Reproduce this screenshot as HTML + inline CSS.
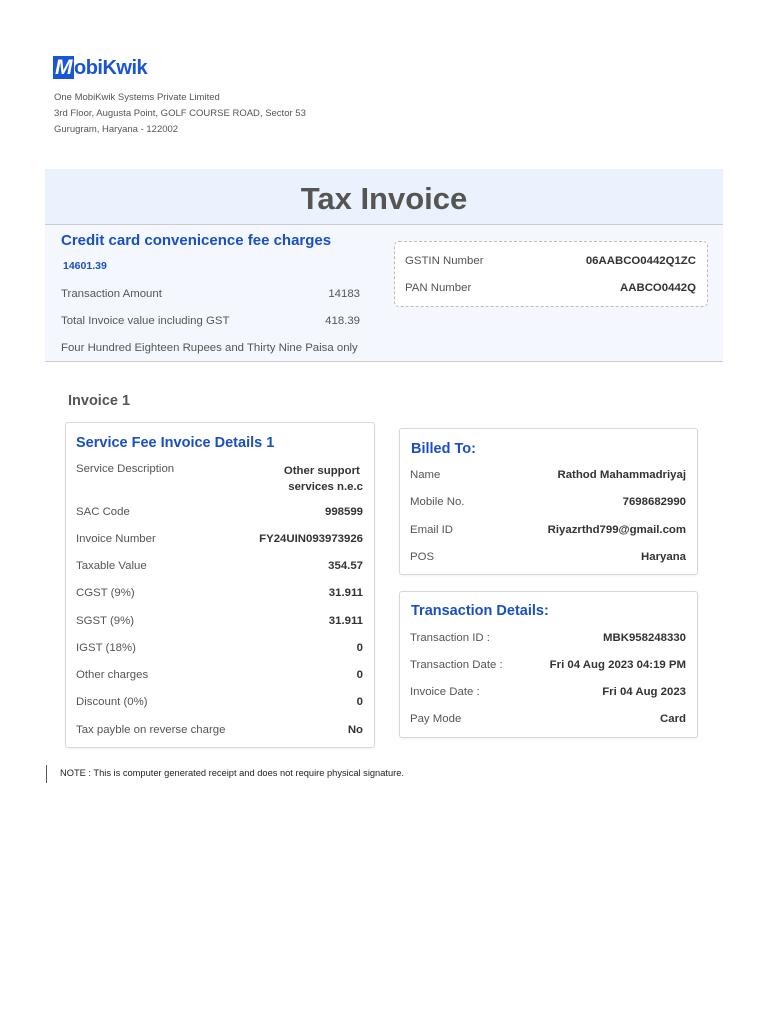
<!DOCTYPE html>
<html><head><meta charset="utf-8"><style>
*{margin:0;padding:0;box-sizing:border-box}
body{width:768px;height:1024px;background:#fff;font-family:"Liberation Sans",Arial,sans-serif;position:relative;overflow:hidden;color:#555}
.a{position:absolute;white-space:nowrap}
.s{font-size:11.4px;color:#555;margin-top:2px}
.b{font-weight:bold;color:#333}
.r{text-align:right}
.blue{color:#1a4fc4;font-weight:bold;margin-top:1px}
.card{position:absolute;border:1px solid #d8d8d8;border-radius:3px;background:#fff;box-shadow:0 1px 2px rgba(0,0,0,.06)}
</style></head><body>
<div class="a" style="left:53px;top:56px;font-size:20px;font-weight:bold;color:#1a55d6;letter-spacing:-0.5px"><span style="background:#1a55d6;color:#fff;padding:0 2px;font-size:21px;font-style:italic">M</span>obiKwik</div>
<div class="a" style="left:54px;top:90px;font-size:9.5px;color:#555;line-height:16px">One MobiKwik Systems Private Limited<br>3rd Floor, Augusta Point, GOLF COURSE ROAD, Sector 53<br>Gurugram, Haryana - 122002</div>

<div class="a" style="left:45px;top:169px;width:678px;height:56px;background:#eaf2fd;border-bottom:1px solid #ccc"></div>
<div class="a" style="left:45px;top:225px;width:678px;height:137px;background:#f4f8fe;border-bottom:1px solid #ccc"></div>
<div class="a" style="left:45px;top:181px;width:678px;text-align:center;font-size:31px;font-weight:bold;color:#555">Tax Invoice</div>
<div class="a blue" style="left:61px;top:231px;font-size:15px">Credit card convenicence fee charges</div>
<div class="a blue" style="left:63px;top:259px;font-size:10.5px">14601.39</div>
<div class="a s" style="left:61px;top:286px">Transaction Amount</div><div class="a s" style="left:300px;width:60px;top:286px;text-align:right">14183</div>
<div class="a s" style="left:61px;top:313px">Total Invoice value including GST</div><div class="a s" style="left:300px;width:60px;top:313px;text-align:right">418.39</div>
<div class="a s" style="left:61px;top:340px">Four Hundred Eighteen Rupees and Thirty Nine Paisa only</div>
<div class="a" style="left:394px;top:241px;width:314px;height:66px;border:1px dashed #bbb;border-radius:5px;background:#fff"></div>
<div class="a s" style="left:405px;top:253px">GSTIN Number</div><div class="a s b" style="left:520px;width:176px;top:253px;text-align:right">06AABCO0442Q1ZC</div>
<div class="a s" style="left:405px;top:280px">PAN Number</div><div class="a s b" style="left:520px;width:176px;top:280px;text-align:right">AABCO0442Q</div>

<div class="a" style="left:68px;top:393px;font-size:14.5px;font-weight:bold;color:#555">Invoice 1</div>

<div class="card" style="left:65px;top:422px;width:310px;height:326px"></div>
<div class="a blue" style="left:76px;top:434px;font-size:14.5px">Service Fee Invoice Details 1</div>
<div class="a s" style="left:76px;top:461px">Service Description</div>
<div class="a s b r" style="left:240px;width:123px;top:461px;line-height:16px">Other support&nbsp;<br>services n.e.c</div>
<div class="a s" style="left:76px;top:504px">SAC Code</div><div class="a s b r" style="left:200px;width:163px;top:504px">998599</div>
<div class="a s" style="left:76px;top:531px">Invoice Number</div><div class="a s b r" style="left:200px;width:163px;top:531px">FY24UIN093973926</div>
<div class="a s" style="left:76px;top:558px">Taxable Value</div><div class="a s b r" style="left:200px;width:163px;top:558px">354.57</div>
<div class="a s" style="left:76px;top:585px">CGST (9%)</div><div class="a s b r" style="left:200px;width:163px;top:585px">31.911</div>
<div class="a s" style="left:76px;top:613px">SGST (9%)</div><div class="a s b r" style="left:200px;width:163px;top:613px">31.911</div>
<div class="a s" style="left:76px;top:640px">IGST (18%)</div><div class="a s b r" style="left:200px;width:163px;top:640px">0</div>
<div class="a s" style="left:76px;top:667px">Other charges</div><div class="a s b r" style="left:200px;width:163px;top:667px">0</div>
<div class="a s" style="left:76px;top:694px">Discount (0%)</div><div class="a s b r" style="left:200px;width:163px;top:694px">0</div>
<div class="a s" style="left:76px;top:722px">Tax payble on reverse charge</div><div class="a s b r" style="left:200px;width:163px;top:722px">No</div>

<div class="card" style="left:399px;top:428px;width:299px;height:147px"></div>
<div class="a blue" style="left:411px;top:440px;font-size:14.5px">Billed To:</div>
<div class="a s" style="left:410px;top:467px">Name</div><div class="a s b r" style="left:480px;width:206px;top:467px">Rathod Mahammadriyaj</div>
<div class="a s" style="left:410px;top:494px">Mobile No.</div><div class="a s b r" style="left:480px;width:206px;top:494px">7698682990</div>
<div class="a s" style="left:410px;top:522px">Email ID</div><div class="a s b r" style="left:480px;width:206px;top:522px">Riyazrthd799@gmail.com</div>
<div class="a s" style="left:410px;top:549px">POS</div><div class="a s b r" style="left:480px;width:206px;top:549px">Haryana</div>

<div class="card" style="left:399px;top:591px;width:299px;height:147px"></div>
<div class="a blue" style="left:411px;top:602px;font-size:14.5px">Transaction Details:</div>
<div class="a s" style="left:410px;top:630px">Transaction ID :</div><div class="a s b r" style="left:480px;width:206px;top:630px">MBK958248330</div>
<div class="a s" style="left:410px;top:657px">Transaction Date :</div><div class="a s b r" style="left:480px;width:206px;top:657px">Fri 04 Aug 2023 04:19 PM</div>
<div class="a s" style="left:410px;top:684px">Invoice Date :</div><div class="a s b r" style="left:480px;width:206px;top:684px">Fri 04 Aug 2023</div>
<div class="a s" style="left:410px;top:711px">Pay Mode</div><div class="a s b r" style="left:480px;width:206px;top:711px">Card</div>

<div class="a" style="left:46px;top:765px;width:1px;height:18px;background:#555"></div>
<div class="a" style="left:60px;top:768px;font-size:9.3px;color:#222">NOTE : This is computer generated receipt and does not require physical signature.</div>
</body></html>
